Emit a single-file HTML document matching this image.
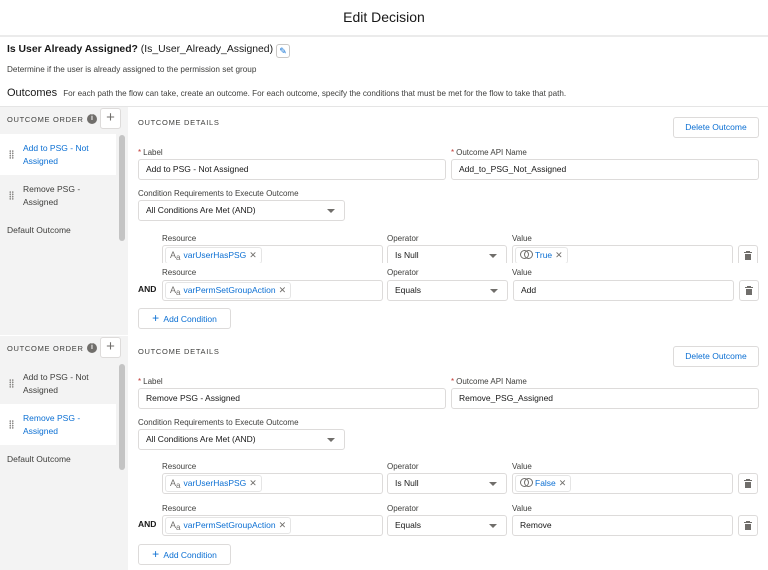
<!DOCTYPE html>
<html><head><meta charset="utf-8"><style>
*{box-sizing:border-box;margin:0;padding:0}
body{width:768px;height:570px;overflow:hidden;background:#fff;font-family:"Liberation Sans",Arial,sans-serif;color:#181818;position:relative}
.a{position:absolute}
.lbl{position:absolute;font-size:8px;color:#3e3e3c;white-space:nowrap}
.req{color:#c23934;margin-right:2px}
.inp{position:absolute;height:21px;border:1px solid #dddbda;border-radius:3px;background:#fff;font-size:8.5px;line-height:19px;padding-left:7px;white-space:nowrap}
.caret{position:absolute;right:9px;top:8px;width:0;height:0;border-left:4px solid transparent;border-right:4px solid transparent;border-top:4px solid #706e6b}
.pill{position:absolute;left:2px;top:1px;height:17px;border:1px solid #e5e5e5;border-radius:3px;padding:0 4px;font-size:8.5px;line-height:15px;color:#0b6fd3;white-space:nowrap}
.pill .x{color:#706e6b;margin-left:3px;font-size:9px}
.aa{color:#706e6b;font-size:9px;margin-right:3px}
.aa sub{font-size:8px;vertical-align:-2px}
.rings{display:inline-block;position:relative;width:13px;height:9px;vertical-align:-1px;margin-right:2px}
.rings i{position:absolute;top:0;width:9px;height:9px;border:1.5px solid #706e6b;border-radius:50%}
.btn{position:absolute;height:21px;border:1px solid #dddbda;border-radius:3px;background:#fff;color:#0b6fd3;font-size:8.5px;line-height:19px;text-align:center}
.trash{position:absolute;width:20px;height:21px;border:1px solid #dddbda;border-radius:3px;background:#fff}
.side{position:absolute;left:0;width:128px;background:#f3f3f3}
.sh{position:absolute;left:7px;font-size:7.5px;letter-spacing:0.7px;color:#3e3e3c;white-space:nowrap}
.item{position:absolute;left:0;width:116px;height:41px;font-size:8.5px;line-height:13px;padding:8px 0 0 23px}
.grip{position:absolute;left:9px;top:16px;width:5px;height:9px;background:radial-gradient(circle,#8a8886 0.8px,transparent 1px) 0 0/2.5px 2.25px}
.sec{position:absolute;left:138px;font-size:7.5px;letter-spacing:0.7px;color:#3e3e3c;white-space:nowrap}
</style></head><body>
<div class="a" style="left:0;top:0;width:768px;height:36px;text-align:center;font-size:14px;line-height:34px">Edit Decision</div>
<div class="a" style="left:0;top:35px;width:768px;height:2px;background:#ebebeb"></div>
<div class="a" style="left:7px;top:44px;font-size:10.4px;white-space:nowrap"><b>Is User Already Assigned?</b> (Is_User_Already_Assigned)</div>
<div class="a" style="left:276px;top:44px;width:14px;height:14px;border:1px solid #c9c7c5;border-radius:3px;color:#0b6fd3;font-size:9px;text-align:center;line-height:12px">&#9998;</div>
<div class="a" style="left:7px;top:65px;font-size:8.2px;color:#3e3e3c;white-space:nowrap">Determine if the user is already assigned to the permission set group</div>
<div class="a" style="left:7px;top:87px;font-size:11px;white-space:nowrap">Outcomes <span style="font-size:8.1px;color:#3e3e3c;margin-left:3px">For each path the flow can take, create an outcome. For each outcome, specify the conditions that must be met for the flow to take that path.</span></div>
<div class="a" style="left:0;top:106px;width:768px;height:1px;background:#e5e5e5"></div>

<div class="side" style="top:107px;height:228px"></div>
<div class="side" style="top:336px;height:234px"></div>

<div class="sh" style="top:115px">OUTCOME ORDER</div>
<div class="a" style="left:87px;top:114px;width:10px;height:10px;border-radius:50%;background:#706e6b;color:#fff;font-size:7px;text-align:center;line-height:10px;font-weight:bold">i</div>
<div class="a" style="left:100px;top:108px;width:21px;height:21px;border:1px solid #dddbda;border-radius:3px;background:#fff;color:#706e6b;text-align:center;font-size:15px;line-height:18px">+</div>
<div class="item" style="top:134px;background:#fff;color:#0b6fd3"><div class="grip"></div>Add to PSG - Not<br>Assigned</div>
<div class="item" style="top:175px;color:#3e3e3c"><div class="grip"></div>Remove PSG -<br>Assigned</div>
<div class="a" style="left:7px;top:225px;font-size:8.5px;color:#3e3e3c">Default Outcome</div>
<div class="a" style="left:119px;top:135px;width:6px;height:106px;border-radius:3px;background:#c4c4c4"></div>

<div class="sh" style="top:344px">OUTCOME ORDER</div>
<div class="a" style="left:87px;top:343px;width:10px;height:10px;border-radius:50%;background:#706e6b;color:#fff;font-size:7px;text-align:center;line-height:10px;font-weight:bold">i</div>
<div class="a" style="left:100px;top:337px;width:21px;height:21px;border:1px solid #dddbda;border-radius:3px;background:#fff;color:#706e6b;text-align:center;font-size:15px;line-height:18px">+</div>
<div class="item" style="top:363px;color:#3e3e3c"><div class="grip"></div>Add to PSG - Not<br>Assigned</div>
<div class="item" style="top:404px;background:#fff;color:#0b6fd3"><div class="grip"></div>Remove PSG -<br>Assigned</div>
<div class="a" style="left:7px;top:454px;font-size:8.5px;color:#3e3e3c">Default Outcome</div>
<div class="a" style="left:119px;top:364px;width:6px;height:106px;border-radius:3px;background:#c4c4c4"></div>

<div class="sec" style="top:118px">OUTCOME DETAILS</div>
<div class="btn" style="left:673px;top:117px;width:86px">Delete Outcome</div>
<div class="lbl" style="left:138px;top:148px"><span class="req">*</span>Label</div>
<div class="inp" style="left:138px;top:159px;width:308px">Add to PSG - Not Assigned</div>
<div class="lbl" style="left:451px;top:148px"><span class="req">*</span>Outcome API Name</div>
<div class="inp" style="left:451px;top:159px;width:308px">Add_to_PSG_Not_Assigned</div>
<div class="lbl" style="left:138px;top:189px">Condition Requirements to Execute Outcome</div>
<div class="inp" style="left:138px;top:200px;width:207px">All Conditions Are Met (AND)<div class="caret"></div></div>

<div class="lbl" style="left:162px;top:234px">Resource</div>
<div class="lbl" style="left:387px;top:234px">Operator</div>
<div class="lbl" style="left:512px;top:234px">Value</div>
<div class="inp" style="left:162px;top:245px;width:221px;padding:0"><div class="pill"><span class="aa">A<sub>a</sub></span>varUserHasPSG<span class="x">✕</span></div></div>
<div class="inp" style="left:387px;top:245px;width:120px">Is Null<div class="caret"></div></div>
<div class="inp" style="left:512px;top:245px;width:221px;padding:0"><div class="pill"><span class="rings"><i style="left:0"></i><i style="left:4px"></i></span>True<span class="x">✕</span></div></div>
<div class="trash" style="left:738px;top:245px"></div>
<div class="a" style="left:138px;top:263px;width:630px;height:40px;background:#fff"></div>
<div class="lbl" style="left:162px;top:268px">Resource</div>
<div class="lbl" style="left:387px;top:268px">Operator</div>
<div class="lbl" style="left:512px;top:268px">Value</div>
<div class="a" style="left:138px;top:284px;font-size:8.5px;font-weight:bold">AND</div>
<div class="inp" style="left:162px;top:280px;width:221px;padding:0"><div class="pill"><span class="aa">A<sub>a</sub></span>varPermSetGroupAction<span class="x">✕</span></div></div>
<div class="inp" style="left:387px;top:280px;width:121px">Equals<div class="caret"></div></div>
<div class="inp" style="left:513px;top:280px;width:221px">Add</div>
<div class="trash" style="left:739px;top:280px"></div>
<div class="btn" style="left:138px;top:308px;width:93px"><span style="font-size:12px">+</span>&nbsp; Add Condition</div>

<div class="sec" style="top:347px">OUTCOME DETAILS</div>
<div class="btn" style="left:673px;top:346px;width:86px">Delete Outcome</div>
<div class="lbl" style="left:138px;top:377px"><span class="req">*</span>Label</div>
<div class="inp" style="left:138px;top:388px;width:308px">Remove PSG - Assigned</div>
<div class="lbl" style="left:451px;top:377px"><span class="req">*</span>Outcome API Name</div>
<div class="inp" style="left:451px;top:388px;width:308px">Remove_PSG_Assigned</div>
<div class="lbl" style="left:138px;top:418px">Condition Requirements to Execute Outcome</div>
<div class="inp" style="left:138px;top:429px;width:207px">All Conditions Are Met (AND)<div class="caret"></div></div>

<div class="lbl" style="left:162px;top:462px">Resource</div>
<div class="lbl" style="left:387px;top:462px">Operator</div>
<div class="lbl" style="left:512px;top:462px">Value</div>
<div class="inp" style="left:162px;top:473px;width:221px;padding:0"><div class="pill"><span class="aa">A<sub>a</sub></span>varUserHasPSG<span class="x">✕</span></div></div>
<div class="inp" style="left:387px;top:473px;width:120px">Is Null<div class="caret"></div></div>
<div class="inp" style="left:512px;top:473px;width:221px;padding:0"><div class="pill"><span class="rings"><i style="left:0"></i><i style="left:4px"></i></span>False<span class="x">✕</span></div></div>
<div class="trash" style="left:738px;top:473px"></div>
<div class="lbl" style="left:162px;top:504px">Resource</div>
<div class="lbl" style="left:387px;top:504px">Operator</div>
<div class="lbl" style="left:512px;top:504px">Value</div>
<div class="a" style="left:138px;top:519px;font-size:8.5px;font-weight:bold">AND</div>
<div class="inp" style="left:162px;top:515px;width:221px;padding:0"><div class="pill"><span class="aa">A<sub>a</sub></span>varPermSetGroupAction<span class="x">✕</span></div></div>
<div class="inp" style="left:387px;top:515px;width:120px">Equals<div class="caret"></div></div>
<div class="inp" style="left:512px;top:515px;width:221px">Remove</div>
<div class="trash" style="left:738px;top:515px"></div>
<div class="btn" style="left:138px;top:544px;width:93px"><span style="font-size:12px">+</span>&nbsp; Add Condition</div>

<svg class="a" style="left:0;top:0;width:768px;height:570px;pointer-events:none" viewBox="0 0 768 570">
<g fill="#706e6b">
<path d="M744 252h8v1h-8zM746 251h4v1h-4zM745 254h6v6h-6z"/>
<path d="M745 287h8v1h-8zM747 286h4v1h-4zM746 289h6v6h-6z"/>
<path d="M744 480h8v1h-8zM746 479h4v1h-4zM745 482h6v6h-6z"/>
<path d="M744 522h8v1h-8zM746 521h4v1h-4zM745 524h6v6h-6z"/>
</g>
</svg>
</body></html>
